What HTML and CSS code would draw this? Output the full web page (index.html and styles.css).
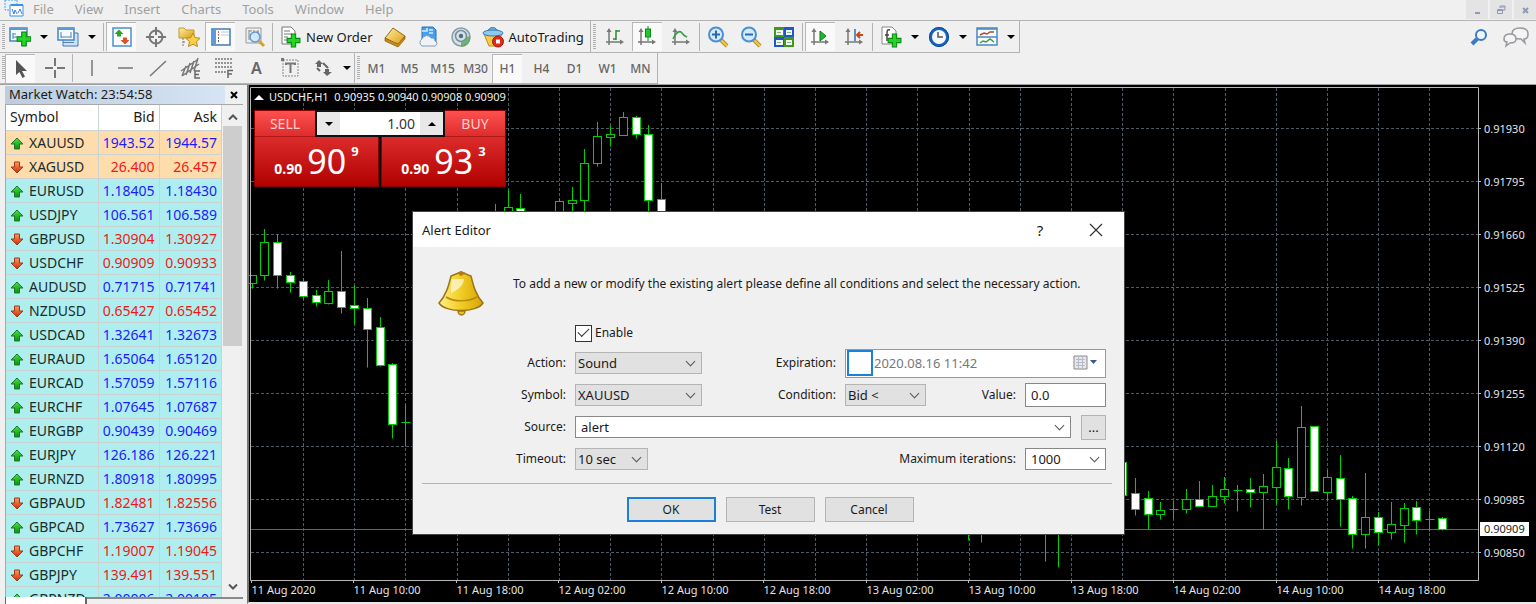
FILE: index.html
```html
<!DOCTYPE html>
<html lang="en">
<head>
    <meta charset="UTF-8">
    <meta name="viewport" content="width=device-width, initial-scale=1.0">
    <title>USDCHF,H1 - Alert Editor</title>
    <link rel="stylesheet" href="styles.css">
</head>
<body>
    <svg width="0" height="0" class="defs">
        <defs>
            <linearGradient id="g-gold" x1="0" y1="0" x2="1" y2="1"><stop offset="0" stop-color="#fff0a0"/><stop offset="1" stop-color="#d99a10"/></linearGradient>
            <linearGradient id="g-bell" x1="0" y1="0" x2="1" y2="0"><stop offset="0" stop-color="#fff08a"/><stop offset=".45" stop-color="#f3d02a"/><stop offset="1" stop-color="#d8a400"/></linearGradient>
            <linearGradient id="g-green" x1="0" y1="0" x2="0" y2="1"><stop offset="0" stop-color="#4fe04f"/><stop offset="1" stop-color="#089008"/></linearGradient>
            <linearGradient id="g-red" x1="0" y1="0" x2="0" y2="1"><stop offset="0" stop-color="#ff9a5a"/><stop offset="1" stop-color="#cc2a08"/></linearGradient>
            <symbol id="up" viewBox="0 0 14 13"><path d="M7 1l6 6h-3.500v5h-5V7H1z" fill="url(#g-green)" stroke="#1a7a2a" stroke-linejoin="round"/></symbol>
            <symbol id="down" viewBox="0 0 14 13"><path d="M7 12l6-6H9.500V1h-5v5H1z" fill="url(#g-red)" stroke="#a03a1a" stroke-linejoin="round"/></symbol>
            <symbol id="plus" viewBox="0 0 14 14"><path d="M5 1h4v4h4v4H9v4H5V9H1V5h4z" fill="#25d425" stroke="#078a12"/></symbol>
            <symbol id="axes" viewBox="0 0 22 22"><path d="M5 4v15M2 16h16" stroke="#777" stroke-width="1.500" fill="none"/><path d="M5 2l-2.500 4h5zM20 16l-4-2.500v5z" fill="#777"/></symbol>
        </defs>
    </svg>

    <header class="menubar">
        <svg class="app-icon" viewBox="0 0 20 18"><path d="M1 0h12v10H1z" fill="#e6f2ff" stroke="#5aa0e0" stroke-dasharray="2 1"/><path d="M6 5h13v11H6z" fill="#fff" stroke="#3f8fe0"/><path d="M7 5h12" stroke="#3f8fe0" stroke-width="2"/><path d="M8 9l2 5 1-4 2 4M14 13l2-4 2 5" fill="none" stroke="#3f7fe0"/></svg>
        <nav class="menu">
            <a href="#">File</a>
            <a href="#">View</a>
            <a href="#">Insert</a>
            <a href="#">Charts</a>
            <a href="#">Tools</a>
            <a href="#">Window</a>
            <a href="#">Help</a>
        </nav>
        <div class="win-controls">
            <button type="button" aria-label="Minimize"><svg viewBox="0 0 10 10"><path d="M3 8h5" stroke-width="2"/></svg></button>
            <button type="button" aria-label="Restore"><svg viewBox="0 0 10 10"><path d="M4 3V1h5v4H7M4 2h5M1.500 4.500h5v4h-5zM1.500 5.500h5"/></svg></button>
            <button type="button" aria-label="Close"><svg viewBox="0 0 10 10"><path d="M3 3l5 5M8 3L3 8" stroke-width="2"/></svg></button>
        </div>
    </header>

    <div class="toolbars">
        <div class="toolbar-row">
            <div class="toolbar main">
                <button type="button" class="tool" aria-label="New chart"><svg viewBox="0 0 22 22"><path d="M1 2h17v13H1z" fill="#f4f9ff" stroke="#3f86c8" stroke-width="1.500"/><path d="M1 3h17" stroke="#5a9bd6" stroke-width="2"/><path d="M4 7v6M4 8h3M4 11h4" stroke="#5580aa"/><use href="#plus" x="7" y="5" width="16" height="16"/></svg></button>
                <button type="button" class="caret" aria-label="New chart list"></button>
                <button type="button" class="tool" aria-label="Profiles"><svg viewBox="0 0 22 22"><path d="M6 7h15v13H6z" fill="#cfe2f4" stroke="#3f78b4"/><path d="M1 2h16v12H1z" fill="#f4f9ff" stroke="#3f86c8" stroke-width="1.500"/><path d="M1 3h16" stroke="#5a9bd6" stroke-width="2"/><path d="M4 11h10M4 6v6M14 6v6M6 16.500h11" stroke="#5580aa"/></svg></button>
                <button type="button" class="caret" aria-label="Profiles list"></button>
                <span class="sep sep-wide"></span>
                <button type="button" class="tool pressed" aria-label="Market Watch"><svg viewBox="0 0 22 22"><path d="M2 2h18v18H2z" fill="#fff" stroke="#4a8fd0" stroke-width="1.500"/><path d="M8 3.500l4.500 4.500h-2.500v2.500H6V8H3.500z" fill="#2aa52a"/><path d="M14 18.500L9.500 14H12v-2.500h4V14h2.500z" fill="#e0502a"/></svg></button>
                <button type="button" class="tool" aria-label="Data Window"><svg viewBox="0 0 22 22"><circle cx="11" cy="11" r="6.500" fill="none" stroke="#777" stroke-width="2"/><path d="M11 1v8M11 13v8M1 11h8M13 11h8" stroke="#777" stroke-width="2"/></svg></button>
                <button type="button" class="tool" aria-label="Navigator"><svg viewBox="0 0 22 22"><path d="M1 2h5l2 2h8v8H1z" fill="url(#g-gold)" stroke="#c49a2a"/><path d="M5 12v8M5 16h3" stroke="#777" stroke-dasharray="2 1"/><path d="M15 7l2.200 4.600 5 .6-3.700 3.400 1 5-4.500-2.500-4.500 2.500 1-5L7.800 12.200l5-.6z" fill="#f8d048" stroke="#b88a20"/></svg></button>
                <button type="button" class="tool pressed" aria-label="Terminal"><svg viewBox="0 0 22 22"><path d="M2 3h18v16H2z" fill="#fff" stroke="#3f78b8" stroke-width="1.500"/><path d="M4 4v14" stroke="#5a9be0" stroke-width="4"/><path d="M8 6h1M8 9h1" stroke="#e03a2a" stroke-width="1.500"/><path d="M8 12h1M8 15h1" stroke="#333" stroke-width="1.500"/><path d="M11 6h8M11 9h8" stroke="#b8c8d8"/></svg></button>
                <button type="button" class="tool" aria-label="Strategy Tester"><svg viewBox="0 0 22 22"><path d="M2 2h15v15H2z" fill="#eee" stroke="#999"/><path d="M5 4v10M5 5h3M10 4v6M14 4v9M12 6h3" stroke="#888"/><path d="M15 15l5 5" stroke="#d8a030" stroke-width="3"/><circle cx="11" cy="11" r="5" fill="#cfe6fa" fill-opacity=".85" stroke="#5a9bd0" stroke-width="1.500"/></svg></button>
                <span class="sep"></span>
                <button type="button" class="tool labelled"><svg viewBox="0 0 22 22"><path d="M3 1h9l4 4v13H3z" fill="#fff" stroke="#777"/><path d="M5 5h6M5 8h8M5 11h4M5 14h3" stroke="#777"/><use href="#plus" x="7" y="7" width="15" height="15"/></svg>New Order</button>
                <button type="button" class="tool" aria-label="MetaEditor"><svg viewBox="0 0 22 22"><path d="M9 2l12 8-7 9L1 12z" fill="url(#g-gold)" stroke="#9a6a10"/><path d="M1 12v3l13 6 7-8v-3l-7 8z" fill="#c88a18" stroke="#8a5a10" stroke-width=".7"/></svg></button>
                <button type="button" class="tool" aria-label="Community"><svg viewBox="0 0 22 22"><path d="M5 1h11l3 3v12H5z" fill="#46a0ee" stroke="#2a70b8"/><path d="M5 5h5V2M12 4h4M12 7h4" stroke="#d8ecff" stroke-width="1.500" fill="none"/><path d="M5 20a4 4 0 0 1 0-7 5 5 0 0 1 9-1 3.500 3.500 0 0 1 4 3 2.600 2.600 0 0 1 0 5z" fill="#eef3fa" stroke="#8a9ab0"/></svg></button>
                <button type="button" class="tool" aria-label="Signals"><svg viewBox="0 0 22 22"><circle cx="11" cy="11" r="9" fill="#d8e0e6" stroke="#8a9aa4" stroke-width="1.500"/><circle cx="11" cy="10" r="5.500" fill="none" stroke="#7090a0" stroke-width="1.500"/><path d="M11 10v11c6 0 10-5 9-11l-4 1c0 3-2 5-5 5" fill="#5aa85a" fill-opacity=".8"/><circle cx="11" cy="10" r="2.200" fill="#4a6f90"/></svg></button>
                <button type="button" class="tool labelled"><svg viewBox="0 0 22 22"><path d="M2 8h18l-6 12H7z" fill="#f4cc48" stroke="#b88a20"/><path d="M6 6c0-6 9-6 10 0z" fill="#6ab4e8" stroke="#3a7ab0"/><ellipse cx="11" cy="7" rx="10" ry="3" fill="#8ccaf4" stroke="#3a7ab0"/><circle cx="16" cy="15.500" r="5.500" fill="#e02a1a" stroke="#a81a10"/><path d="M14 13.500h4v4h-4z" fill="#fff"/></svg>AutoTrading</button>
            </div>
            <div class="toolbar charts">
                <button type="button" class="tool" aria-label="Bar chart"><svg viewBox="0 0 22 22"><use href="#axes"/><path d="M12 4v10M12 5h4M9 13h3" stroke="#2a8a2a" stroke-width="1.500" fill="none"/></svg></button>
                <button type="button" class="tool pressed" aria-label="Candlesticks"><svg viewBox="0 0 22 22"><use href="#axes"/><path d="M12 0v15" stroke="#0a8a1a"/><rect x="9.500" y="3" width="5" height="8" fill="#1ec82e" stroke="#0a8a1a"/></svg></button>
                <button type="button" class="tool" aria-label="Line chart"><svg viewBox="0 0 22 22"><use href="#axes"/><path d="M3 13c3-7 7-9 9-6s3 3 5 4" fill="none" stroke="#3a9a4a" stroke-width="1.500"/></svg></button>
                <span class="sep"></span>
                <button type="button" class="tool" aria-label="Zoom in"><svg viewBox="0 0 22 22"><path d="M14 14l6 6" stroke="#b88a20" stroke-width="4"/><path d="M14 14l6 6" stroke="#f4cc48" stroke-width="2"/><circle cx="9" cy="8.500" r="7" fill="#d4ebff" stroke="#4a90d4" stroke-width="2"/><path d="M5 8.500h8M9 4.500v8" stroke="#2a6aa8" stroke-width="2"/></svg></button>
                <button type="button" class="tool" aria-label="Zoom out"><svg viewBox="0 0 22 22"><path d="M14 14l6 6" stroke="#b88a20" stroke-width="4"/><path d="M14 14l6 6" stroke="#f4cc48" stroke-width="2"/><circle cx="9" cy="8.500" r="7" fill="#d4ebff" stroke="#4a90d4" stroke-width="2"/><path d="M5 8.500h8" stroke="#2a6aa8" stroke-width="2"/></svg></button>
                <button type="button" class="tool" aria-label="Tile windows"><svg viewBox="0 0 22 22"><path d="M1 1h10v10H1zM11 11h10v10H11z" fill="#3f9a18"/><path d="M11 1h10v10H11zM1 11h10v10H1z" fill="#2456c8"/><path d="M3 4h7v5H3zM13 4h6v5h-6zM3 14h7v5H3zM13 14h6v5h-6z" fill="#f2f8f2"/><path d="M4 6.500h4M14 6.500h4M4 16.500h4M14 16.500h4" stroke="#8ab08a"/></svg></button>
                <span class="sep"></span>
                <button type="button" class="tool pressed" aria-label="Auto scroll"><svg viewBox="0 0 22 22"><use href="#axes"/><path d="M11 5l6 5-6 5z" fill="#1eb82e" stroke="#0a7a1a"/></svg></button>
                <button type="button" class="tool" aria-label="Chart shift"><svg viewBox="0 0 22 22"><use href="#axes"/><path d="M12 3v12" stroke="#2a70b0" stroke-width="1.500"/><path d="M14 9h6M17 6l-3 3 3 3" fill="none" stroke="#c8481a" stroke-width="2"/></svg></button>
                <span class="sep"></span>
                <button type="button" class="tool" aria-label="Indicators"><svg viewBox="0 0 22 22"><path d="M2 1h10l4 4v13H2z" fill="#fff" stroke="#888"/><path d="M10 4c-3-1-3 1-3 4v7M5 9h4" fill="none" stroke="#444" stroke-width="1.500"/><use href="#plus" x="7" y="7" width="15" height="15"/></svg></button>
                <button type="button" class="caret" aria-label="Indicators list"></button>
                <button type="button" class="tool" aria-label="Periods"><svg viewBox="0 0 22 22"><circle cx="11" cy="11" r="8.500" fill="#f4f8ff" stroke="#1a64c0" stroke-width="3"/><circle cx="11" cy="11" r="9.500" fill="none" stroke="#0a4a98"/><path d="M10 6v5h5" fill="none" stroke="#555" stroke-width="1.500"/></svg></button>
                <button type="button" class="caret" aria-label="Periods list"></button>
                <button type="button" class="tool" aria-label="Templates"><svg viewBox="0 0 22 22"><path d="M1 2h20v17H1z" fill="#f8fbff" stroke="#4a88c4" stroke-width="1.500"/><path d="M1 3h20M1 11h20" stroke="#4a88c4" stroke-width="1.500"/><path d="M4 9l4-2 3 1 3-2 4 0" fill="none" stroke="#b8482a" stroke-width="1.500"/><path d="M4 17l3-2 3 1 4-3 4 3" fill="none" stroke="#3a9a4a" stroke-width="1.500"/></svg></button>
                <button type="button" class="caret" aria-label="Templates list"></button>
            </div>
            <div class="quick">
                <button type="button" aria-label="Search"><svg viewBox="0 0 18 18"><path d="M2 16l5-5" stroke="#3a78c8" stroke-width="4"/><circle cx="11" cy="7" r="5" fill="#eef4fc" stroke="#3a7ac8" stroke-width="2"/></svg></button>
                <button type="button" aria-label="Chat" class="chat"><svg viewBox="0 0 28 22"><path d="M18 2c5 0 8 2 8 6s-2 5-4 5l1 4-4-4c-6 0-9-1-9-5s3-6 8-6z" fill="#f4f4f8" stroke="#999" stroke-width="1.500"/><path d="M8 8c4 0 6 2 6 5s-2 4-6 4l-4 3 1-4c-2 0-3-1-3-3 0-3 2-5 6-5z" fill="#f4f4f8" stroke="#999" stroke-width="1.500"/></svg></button>
            </div>
        </div>
        <div class="toolbar-row">
            <div class="toolbar">
                <button type="button" class="tool pressed" aria-label="Cursor"><svg viewBox="0 0 22 22"><path d="M6 2v15l3.500-3 3 6 2.500-1.500-3-5.500h5z" fill="#555"/></svg></button>
                <button type="button" class="tool" aria-label="Crosshair"><svg viewBox="0 0 22 22"><path d="M11 1v8M11 13v8M1 11h8M13 11h8" stroke="#777" stroke-width="2"/></svg></button>
                <span class="sep"></span>
                <button type="button" class="tool" aria-label="Vertical line"><svg viewBox="0 0 22 22"><path d="M11 3v16" stroke="#777" stroke-width="1.500"/></svg></button>
                <button type="button" class="tool" aria-label="Horizontal line"><svg viewBox="0 0 22 22"><path d="M4 11h15" stroke="#777" stroke-width="1.500"/></svg></button>
                <button type="button" class="tool" aria-label="Trendline"><svg viewBox="0 0 22 22"><path d="M3 19L19 4" stroke="#777" stroke-width="1.500"/></svg></button>
                <button type="button" class="tool" aria-label="Equidistant channel"><svg viewBox="0 0 22 22"><path d="M1 14L17 3M2 19L19 7M6 9l-4 10M10 6L6 18M14 4l-4 12M18 1l-4 13" stroke="#777" stroke-width="1.500"/><path d="M20 14h-5v7h5M15 17.500h4" fill="none" stroke="#666" stroke-width="1.500"/></svg></button>
                <button type="button" class="tool" aria-label="Fibonacci"><svg viewBox="0 0 22 22"><path d="M2 2h17M2 6h17M2 10h17M2 15h11" stroke="#777" stroke-width="1.500" stroke-dasharray="2 1"/><path d="M20 13.500h-5V21M15 17h4" fill="none" stroke="#666" stroke-width="1.500"/></svg></button>
                <button type="button" class="tool glyph">A</button>
                <button type="button" class="tool" aria-label="Text label"><svg viewBox="0 0 22 22"><path d="M4 3h15v16H4z" fill="none" stroke="#888" stroke-dasharray="2 1"/><path d="M7 8V6.500h9V8M11.500 7v9" fill="none" stroke="#777" stroke-width="2"/><path d="M2 1h3v3H2z" fill="#777"/></svg></button>
                <button type="button" class="tool" aria-label="Arrows"><svg viewBox="0 0 22 22"><path d="M7 3l4 4H9v3H5V7H3zM15 19l-4-4h2v-3h4v3h3z" fill="#666"/><path d="M5 11l3 3M11 6l5 5" stroke="#666" stroke-width="2"/></svg></button>
                <button type="button" class="caret" aria-label="Arrows list"></button>
            </div>
            <div class="toolbar periods">
                <button type="button" class="tool">M1</button>
                <button type="button" class="tool">M5</button>
                <button type="button" class="tool">M15</button>
                <button type="button" class="tool">M30</button>
                <button type="button" class="tool pressed">H1</button>
                <button type="button" class="tool">H4</button>
                <button type="button" class="tool">D1</button>
                <button type="button" class="tool">W1</button>
                <button type="button" class="tool">MN</button>
            </div>
        </div>
    </div>

    <main class="workspace">
        <aside class="market">
            <div class="market-title">
                <span>Market Watch: 23:54:58</span>
                <button type="button" aria-label="Close Market Watch"><svg viewBox="0 0 8 8"><path d="M1 1l6 6M7 1L1 7" stroke="#000" stroke-width="2"/></svg></button>
            </div>
            <div class="market-body">
                <table class="quotes">
                    <thead>
                        <tr><th>Symbol</th><th>Bid</th><th>Ask</th></tr>
                    </thead>
                    <tbody>
                        <tr class="up metal"><td><svg><use href="#up"/></svg>XAUUSD</td><td>1943.52</td><td>1944.57</td></tr>
                        <tr class="down metal"><td><svg><use href="#down"/></svg>XAGUSD</td><td>26.400</td><td>26.457</td></tr>
                        <tr class="up"><td><svg><use href="#up"/></svg>EURUSD</td><td>1.18405</td><td>1.18430</td></tr>
                        <tr class="up"><td><svg><use href="#up"/></svg>USDJPY</td><td>106.561</td><td>106.589</td></tr>
                        <tr class="down"><td><svg><use href="#down"/></svg>GBPUSD</td><td>1.30904</td><td>1.30927</td></tr>
                        <tr class="down"><td><svg><use href="#down"/></svg>USDCHF</td><td>0.90909</td><td>0.90933</td></tr>
                        <tr class="up"><td><svg><use href="#up"/></svg>AUDUSD</td><td>0.71715</td><td>0.71741</td></tr>
                        <tr class="down"><td><svg><use href="#down"/></svg>NZDUSD</td><td>0.65427</td><td>0.65452</td></tr>
                        <tr class="up"><td><svg><use href="#up"/></svg>USDCAD</td><td>1.32641</td><td>1.32673</td></tr>
                        <tr class="up"><td><svg><use href="#up"/></svg>EURAUD</td><td>1.65064</td><td>1.65120</td></tr>
                        <tr class="up"><td><svg><use href="#up"/></svg>EURCAD</td><td>1.57059</td><td>1.57116</td></tr>
                        <tr class="up"><td><svg><use href="#up"/></svg>EURCHF</td><td>1.07645</td><td>1.07687</td></tr>
                        <tr class="up"><td><svg><use href="#up"/></svg>EURGBP</td><td>0.90439</td><td>0.90469</td></tr>
                        <tr class="up"><td><svg><use href="#up"/></svg>EURJPY</td><td>126.186</td><td>126.221</td></tr>
                        <tr class="up"><td><svg><use href="#up"/></svg>EURNZD</td><td>1.80918</td><td>1.80995</td></tr>
                        <tr class="down"><td><svg><use href="#down"/></svg>GBPAUD</td><td>1.82481</td><td>1.82556</td></tr>
                        <tr class="up"><td><svg><use href="#up"/></svg>GBPCAD</td><td>1.73627</td><td>1.73696</td></tr>
                        <tr class="down"><td><svg><use href="#down"/></svg>GBPCHF</td><td>1.19007</td><td>1.19045</td></tr>
                        <tr class="down"><td><svg><use href="#down"/></svg>GBPJPY</td><td>139.491</td><td>139.551</td></tr>
                        <tr class="up"><td><svg><use href="#up"/></svg>GBPNZD</td><td>2.00006</td><td>2.00105</td></tr>
                    </tbody>
                </table>
                <div class="scrollbar">
                    <svg viewBox="0 0 10 6"><path d="M1 5.500l4-4 4 4"/></svg>
                    <div class="thumb"></div>
                    <svg viewBox="0 0 10 6"><path d="M1 .5l4 4 4-4"/></svg>
                </div>
            </div>
            <div class="market-tabs"><span></span></div>
        </aside>

        <section class="chart">
            <svg id="chart"></svg>
            <h2 class="chart-title"><i></i>USDCHF,H1&nbsp; 0.90935 0.90940 0.90908 0.90909</h2>
            <div class="one-click">
                <button type="button" class="deal sell"><span class="side">SELL</span><span class="price"><b>0.90</b><big>90</big><sup>9</sup></span></button>
                <button type="button" class="deal buy"><span class="side">BUY</span><span class="price"><b>0.90</b><big>93</big><sup>3</sup></span></button>
                <div class="lots">
                    <button type="button" aria-label="Less" class="less"></button>
                    <input type="text" value="1.00" aria-label="Volume">
                    <button type="button" aria-label="More" class="more"></button>
                </div>
            </div>
            <form class="dialog" role="dialog" aria-labelledby="dialog-title">
                <div class="dialog-head">
                    <h1 id="dialog-title">Alert Editor</h1>
                    <button type="button" class="help">?</button>
                    <button type="button" aria-label="Close"><svg viewBox="0 0 14 14"><path d="M1 1l12 12M13 1L1 13" stroke="#333" stroke-width="1.200"/></svg></button>
                </div>
                <div class="intro">
                    <svg class="bell" viewBox="0 0 48 48"><path d="M21 41a3.500 4 0 0 0 7 0z" fill="#f0c020" stroke="#a87a10" stroke-width="1.500"/><path d="M14 6l10-4 10 4c2 8 4 18 12 27-6 10-38 10-44 0 8-9 10-19 12-27z" fill="url(#g-bell)" stroke="#9a7418" stroke-width="1.500"/><path d="M9 27c8 5 22 5 31 0" fill="none" stroke="#b88a10" stroke-width="1.500"/><path d="M20 3l4-2 5 2-5 3z" fill="#b07a18"/><path d="M15 9h12c0 6-7 12-13 14 0-5 0-9 1-14z" fill="#fff" fill-opacity=".6"/></svg>
                    <p>To add a new or modify the existing alert please define all conditions and select the necessary action.</p>
                </div>
                <div class="fields">
                    <label class="check"><input type="checkbox" checked>Enable</label>

                    <label class="c1" for="action">Action:</label>
                    <span class="select"><select id="action"><option>Sound</option></select></span>
                    <label for="expiration">Expiration:</label>
                    <span class="date">
                        <input type="checkbox" aria-label="Use expiration">
                        <input type="text" id="expiration" value="2020.08.16 11:42">
                        <svg viewBox="0 0 24 16"><path d="M1 1h13v13H1z" fill="#e8e8ec" stroke="#888"/><path d="M3 4.500h9M3 7.500h9M3 10.500h9M5.500 2v11M9.500 2v11" stroke="#b4bcc8"/><path d="M17 5h7l-3.500 4z" fill="#3a5a8c"/></svg>
                    </span>

                    <label class="c1" for="symbol">Symbol:</label>
                    <span class="select"><select id="symbol"><option>XAUUSD</option></select></span>
                    <label for="condition">Condition:</label>
                    <span class="select"><select id="condition"><option>Bid &lt;</option></select></span>
                    <label for="value">Value:</label>
                    <input type="text" id="value" value="0.0">

                    <label class="c1" for="source">Source:</label>
                    <span class="source">
                        <span class="select combo"><select id="source"><option>alert</option></select></span>
                        <button type="button">...</button>
                    </span>

                    <label class="c1" for="timeout">Timeout:</label>
                    <span class="select short"><select id="timeout"><option>10 sec</option></select></span>
                    <label class="wide" for="iterations">Maximum iterations:</label>
                    <span class="select combo"><select id="iterations"><option>1000</option></select></span>
                </div>
                <div class="actions">
                    <button type="submit" class="default">OK</button>
                    <button type="button">Test</button>
                    <button type="button">Cancel</button>
                </div>
            </form>
        </section>
    </main>
    <script src="chart.js"></script>
</body>
</html>
```
FILE: styles.css
```css
* { box-sizing: border-box; }
body { margin: 0; height: 100vh; overflow: hidden; display: flex; flex-direction: column; background: #f0f0f0; color: #1a1a1a; font-family: "Noto Sans", "Open Sans", sans-serif; font-size: 14px; }
button, input, select { font: inherit; color: inherit; margin: 0; padding: 0; border: 0; border-radius: 0; background: none; }
svg { display: block; flex: none; }
.defs { position: absolute; }

/* menu */
.menubar { display: flex; height: 21px; border-bottom: 1px solid #b4b4b4; }
.app-icon { width: 20px; height: 18px; margin-left: 4px; }
.menu { display: flex; gap: 21px; flex: 1; padding-left: 9px; font-size: 13px; line-height: 18px; }
.menu a { color: #a0a0a0; text-decoration: none; }
.win-controls { display: flex; gap: 2px; height: 19px; }
.win-controls button { width: 22px; background: #e4e4e4; display: flex; align-items: center; justify-content: center; }
.win-controls svg { width: 10px; height: 10px; fill: none; stroke: #8f9bb3; }

/* toolbars */
.toolbars { background: #f0f0f0; font-size: 13px; }
.toolbar-row { display: flex; height: 32px; }
.toolbar-row + .toolbar-row { height: 31px; }
.toolbar { display: flex; align-items: center; padding-left: 5px; border-right: 1px solid #b4b4b4; border-bottom: 1px solid #b4b4b4; position: relative; }
.toolbar.main { padding-left: 3px; }
.toolbar.charts { padding-left: 8px; }
.toolbar::before { content: ""; position: absolute; left: 2px; top: 3px; bottom: 3px; width: 3px; background: repeating-linear-gradient(#b0b0b0 0 1px, #f0f0f0 1px 2px); }
.tool { width: 33px; height: 29px; display: flex; align-items: center; justify-content: center; }
.tool svg { width: 22px; height: 22px; }
.pressed { background: #f9f9f9; border: solid #b8b8b8; border-width: 1px 0 0 1px; width: 30px; margin-right: 3px; }
.labelled { width: auto; padding: 0 6px 0 4px; gap: 5px; }
.caret { width: 15px; height: 29px; display: flex; align-items: center; justify-content: center; }
.caret::after { content: ""; border: 4px solid transparent; border-top-color: #000; border-bottom: 0; }
.sep { width: 1px; height: 28px; background: #b4b4b4; margin: 0 2px 0 1px; }
.sep-wide { margin-left: 4px; }
.glyph { font-weight: 600; font-size: 16px; color: #666; }
.periods { font-size: 12px; font-weight: 500; color: #666; }
.quick { display: flex; align-items: center; gap: 14px; margin-left: auto; padding-right: 6px; }
.quick svg { width: 18px; height: 18px; }
.quick .chat svg { width: 28px; height: 22px; }

.workspace { flex: 1; display: flex; min-height: 0; border-top: 1px solid #a0a0a0; }

/* market watch */
.market { width: 243px; padding-left: 5px; display: flex; flex-direction: column; flex: none; }
.market-title { display: flex; height: 20px; border-bottom: 1px solid #a8a8a8; font-size: 13px; line-height: 17px; }
.market-title span { flex: 1; background: linear-gradient(90deg, #bccde0, #d6e4f4); padding-left: 4px; margin-top: 1px; }
.market-title button { width: 18px; display: flex; align-items: center; justify-content: center; }
.market-title svg { width: 8px; height: 8px; }
.market-body { flex: 1; min-height: 0; display: flex; overflow: hidden; border-left: 1px solid #a8a8a8; }
.quotes { width: 216px; border-collapse: collapse; table-layout: fixed; align-self: flex-start; line-height: 23px; }
.quotes th, .quotes td { padding: 0 4px 0 0; height: 24px; border-right: 1px solid #ccd2d2; border-bottom: 1px solid #ccd2d2; text-align: right; overflow: hidden; }
.quotes th { background: #fff; font-weight: 400; height: 25px; line-height: 24px; }
.quotes th:first-child { width: 92px; text-align: left; padding-left: 4px; }
.quotes th:nth-child(2) { width: 61px; }
.quotes td svg { width: 14px; height: 13px; display: inline-block; vertical-align: -2px; margin-right: 5px; }
.quotes tr { background: #afeeee; }
.quotes .metal { background: #ffdcac; }
.quotes .up td { color: #1c1cff; }
.quotes .down td { color: #f01818; }
.quotes tr td:first-child { text-align: left; padding-left: 4px; color: #1c2c2c; }
.scrollbar { flex: 1; display: flex; flex-direction: column; align-items: center; padding: 9px 0 7px; }
.scrollbar svg { width: 10px; height: 6px; fill: none; stroke: #555; stroke-width: 2; }
.thumb { width: 19px; height: 220px; margin: 6px 0 auto; background: #cdcdcd; }
.market-tabs { height: 7px; border-top: 2px solid #8a8a8a; }
.market-tabs span { display: block; width: 82px; height: 7px; margin-top: -2px; background: #fff; border: solid #666; border-width: 0 2px 0 1px; }

/* chart */
.chart { position: relative; flex: 1; min-width: 0; margin-left: 4px; background: #000; border-left: 2px solid #777; border-bottom: 2px solid #e8e8e8; }
#chart { width: 100%; height: 100%; }
#chart text { fill: #e4e4e4; font-size: 11px; }
#chart text.now { fill: #222; }
.grid { stroke: #4f5a67; stroke-dasharray: 3 2; }
.frame { stroke: #b8b8b8; fill: none; }
.bid { stroke: #5a6674; }
.candle line, .candle rect { stroke: #00d000; }
.candle rect { fill: #000; }
.candle.bear rect { fill: #fff; }
.chart-title { position: absolute; left: 5px; top: 4px; margin: 0; color: #f0f0f0; font-size: 11px; font-weight: 400; line-height: 16px; display: flex; align-items: center; gap: 5px; }
.chart-title i { border: 5px solid transparent; border-top: 0; border-bottom-color: #fff; }

.one-click { position: absolute; left: 5px; top: 25px; display: flex; gap: 2px; }
.deal { width: 125px; height: 77px; display: flex; flex-direction: column; color: #fff; border: 1px solid #8a0000; background: linear-gradient(#ff5050, #dc2c2c 34%, #b00000); }
.side { width: 60px; height: 26px; line-height: 25px; color: #ffd0d0; border-bottom: 1px solid #b01818; }
.buy .side { align-self: flex-end; }
.price { display: flex; align-items: baseline; justify-content: center; height: 49px; width: 100%; line-height: 49px; gap: 5px; }
.price b { font-size: 14px; }
.price big { font-size: 34px; }
.price sup { font-size: 13px; font-weight: 700; line-height: 28px; align-self: flex-start; }
.lots { position: absolute; left: 61px; top: 0; width: 130px; height: 27px; display: flex; background: #fff; border: 2px solid #111; }
.lots button { width: 23px; background: #e8e8e8; display: flex; align-items: center; justify-content: center; }
.less::after { content: ""; border: 4px solid transparent; border-top-color: #000; border-bottom: 0; }
.more::after { content: ""; border: 4px solid transparent; border-bottom-color: #000; border-top: 0; }
.lots input { flex: 1; min-width: 0; text-align: right; padding-right: 5px; color: #333; }

/* alert editor */
.dialog { position: absolute; left: 164px; top: 127px; width: 711px; background: #f0f0f0; font-size: 13px; box-shadow: 0 0 0 1px #444; }
.dialog-head { display: flex; align-items: center; height: 35px; background: #fff; padding-left: 9px; }
.dialog-head h1 { flex: 1; margin: 0; font-size: 13px; font-weight: 400; }
.dialog-head button { width: 56px; height: 35px; display: flex; align-items: center; justify-content: center; }
.dialog-head .help { font-size: 15px; }
.dialog-head svg { width: 14px; height: 14px; }
.intro { display: flex; gap: 28px; padding: 23px 0 0 24px; }
.bell { width: 48px; height: 48px; }
.intro p { margin: 5px 0 0; font-size: 12px; line-height: 18px; white-space: nowrap; }
.fields { display: grid; grid-template-columns: 66px 127px 1fr 81px 81px 81px; grid-template-rows: 18px; grid-auto-rows: 22px; gap: 10px 9px; align-items: center; padding: 6px 18px 13px 87px; }
.fields label { text-align: right; font-size: 12px; line-height: 20px; }
.fields .c1 { grid-column: 1; }
.fields .wide { grid-column: 4 / 6; white-space: nowrap; }
.fields .check { grid-column: 2 / 7; display: flex; align-items: center; gap: 3px; }
input[type="checkbox"] { appearance: none; width: 17px; height: 17px; background: #fff; border: 1px solid #333; display: flex; align-items: center; justify-content: center; }
input[type="checkbox"]:checked::after { content: ""; width: 10px; height: 5px; border: solid #333; border-width: 0 0 1px 1px; transform: translateY(-2px) rotate(-45deg); }
.select { position: relative; display: block; height: 22px; }
.select select { appearance: none; display: block; width: 100%; height: 100%; padding-left: 2px; background: #e1e1e1; border: 1px solid #b4b4b4; }
.select::after { content: ""; position: absolute; right: 8px; top: 6px; width: 6px; height: 6px; border: solid #555; border-width: 0 1px 1px 0; transform: rotate(45deg); pointer-events: none; }
.select.combo select, #value { background: #fff; border: 1px solid #888; padding-left: 5px; }
.short { width: 73px; }
#value { width: 100%; height: 24px; }
.date { grid-column: 4 / 7; height: 29px; display: flex; align-items: center; background: #fff; border: 1px solid #999; padding: 0 8px 0 1px; }
.date input[type="checkbox"] { width: 26px; height: 26px; border: 2px solid #1a80d8; }
.date input[type="text"] { flex: 1; min-width: 0; color: #777; padding-left: 1px; }
.date svg { width: 24px; height: 16px; }
.source { grid-column: 2 / 7; display: flex; gap: 10px; align-items: center; }
.source .select { flex: 1; }
.source button { width: 25px; height: 25px; background: #e1e1e1; border: 1px solid #b4b4b4; }
.actions { display: flex; justify-content: center; gap: 10px; margin: 0 12px 0 9px; padding: 13px 0 12px 6px; border-top: 1px solid #b4b4b4; font-size: 12px; }
.actions button { width: 89px; height: 25px; background: #e1e1e1; border: 1px solid #b4b4b4; }
.actions .default { border: 2px solid #1a80d8; }
```
FILE: chart.js
```js
const NS = 'http://www.w3.org/2000/svg';
const svg = document.getElementById('chart');
const W = svg.clientWidth;
const H = svg.clientHeight;
const right = W - 58;
const bottom = H - 22;
const step = 12.8;

function add(parent, name, attrs, text) {
    const el = document.createElementNS(NS, name);
    for (const key in attrs) el.setAttribute(key, attrs[key]);
    if (text) el.textContent = text;
    parent.appendChild(el);
    return el;
}

function line(x1, y1, x2, y2, cls) {
    add(svg, 'line', { x1, y1, x2, y2, class: cls });
}

// grid, one vertical every 4 candles, one horizontal every 135 points
for (let i = 0; i < 23; i++) {
    const x = Math.round(54 + i * 51.2) + 0.5;
    line(x, 3, x, bottom, 'grid');
}
const prices = ['0.91930', '0.91795', '0.91660', '0.91525', '0.91390', '0.91255', '0.91120', '0.90985', '0.90850'];
prices.forEach(function (price, i) {
    const y = Math.round(43 + i * 53) + 0.5;
    line(2, y, right, y, 'grid');
    line(right, y, right + 3, y, 'frame');
    add(svg, 'text', { x: right + 6, y: y + 4 }, price);
});

// current bid
line(2, 444.5, right, 444.5, 'bid');

// [index, high, body top, body bottom, low, bear]
const candles = [
    [-1, 190, 190, 198, 203, 0], [0, 144, 157, 190, 195, 0], [1, 149, 157, 190, 203, 1], [2, 187, 190, 197, 207, 1],
    [3, 193, 196, 211, 214, 1], [4, 205, 210, 217, 221, 1], [5, 195, 206, 218, 219, 0], [6, 166, 206, 222, 228, 1],
    [7, 200, 220, 223, 239, 1], [8, 213, 223, 244, 282, 1], [9, 232, 242, 280, 281, 1], [10, 278, 279, 339, 353, 1],
    [11, 320, 337, 337, 361, 1], [18, 119, 130, 140, 150, 0], [19, 105, 122, 140, 150, 0], [20, 109, 123, 140, 150, 1],
    [23, 114, 116, 130, 150, 0], [24, 102, 115, 118, 150, 0], [25, 64, 78, 115, 130, 0], [26, 37, 51, 78, 81, 0],
    [27, 41, 49, 52, 61, 0], [28, 27, 32, 50, 50, 0], [29, 31, 32, 49, 53, 1], [30, 40, 49, 115, 130, 1],
    [31, 98, 114, 130, 150, 1], [55, 430, 430, 440, 455, 0], [56, 430, 430, 440, 457, 0], [61, 430, 430, 440, 476, 0],
    [62, 430, 449, 449, 482, 0], [67, 377, 377, 410, 410, 1], [68, 393, 408, 424, 430, 1], [69, 406, 413, 429, 444, 1],
    [70, 417, 425, 429, 434, 0], [71, 416, 424, 424, 433, 0], [72, 404, 414, 424, 428, 0], [73, 396, 414, 421, 421, 1],
    [74, 400, 411, 421, 421, 0], [75, 392, 404, 411, 418, 0], [76, 400, 405, 405, 426, 0], [77, 393, 404, 407, 422, 1],
    [78, 389, 401, 407, 444, 0], [79, 356, 382, 402, 419, 0], [80, 373, 383, 411, 424, 1], [81, 321, 342, 412, 420, 0],
    [82, 341, 341, 406, 406, 1], [83, 385, 392, 407, 416, 0], [84, 370, 393, 414, 441, 1], [85, 411, 413, 449, 463, 1],
    [86, 388, 432, 449, 463, 0], [87, 427, 432, 447, 460, 1], [88, 417, 439, 447, 454, 0], [89, 418, 423, 440, 457, 0],
    [90, 416, 422, 435, 449, 1], [91, 426, 434, 434, 446, 0], [92, 432, 433, 444, 445, 1]
];
candles.forEach(function (c) {
    const x = Math.round(15.4 + c[0] * step) + 0.5;
    const g = add(svg, 'g', { class: c[5] ? 'candle bear' : 'candle' });
    add(g, 'line', { x1: x, y1: c[1], x2: x, y2: c[4] + 0.5 });
    if (c[2] === c[3]) {
        add(g, 'line', { x1: x - 4, y1: c[2] + 0.5, x2: x + 5, y2: c[2] + 0.5 });
    } else {
        add(g, 'rect', { x: x - 4, y: c[2] + 0.5, width: 8, height: c[3] - c[2] });
    }
});

// frame and axes
add(svg, 'path', { d: `M1.5 ${bottom + 0.5}V2.5H${right + 0.5}V${bottom + 0.5}z`, class: 'frame' });
const times = ['11 Aug 2020', '11 Aug 10:00', '11 Aug 18:00', '12 Aug 02:00', '12 Aug 10:00', '12 Aug 18:00',
    '13 Aug 02:00', '13 Aug 10:00', '13 Aug 18:00', '14 Aug 02:00', '14 Aug 10:00', '14 Aug 18:00'];
times.forEach(function (time, i) {
    const x = Math.round(2 + i * 102.45) + 0.5;
    line(x, bottom, x, bottom + 3, 'frame');
    add(svg, 'text', { x: x, y: bottom + 14 }, time);
});
add(svg, 'rect', { x: right + 2, y: 437, width: 49, height: 14, fill: '#fff' });
add(svg, 'text', { x: right + 6, y: 448, class: 'now' }, '0.90909');
```
